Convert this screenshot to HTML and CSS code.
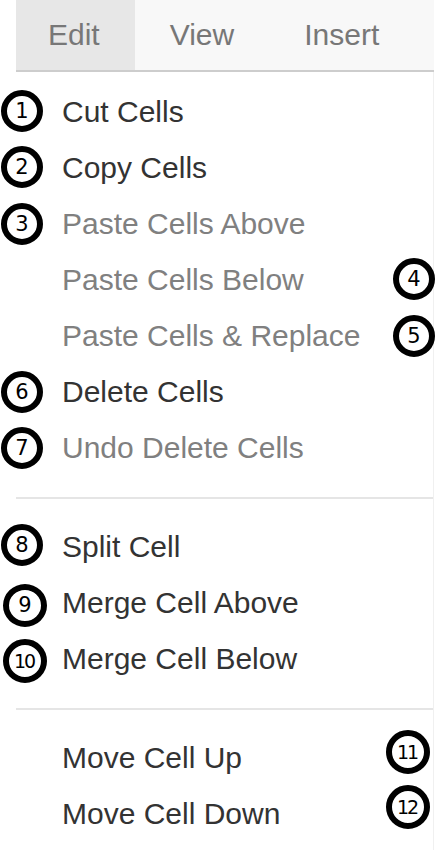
FILE: index.html
```html
<!DOCTYPE html>
<html>
<head>
<meta charset="utf-8">
<link rel="stylesheet" href="styles.css">
</head>
<body>
<div class="page">
  <div class="navbar">
    <div class="tab active">Edit</div>
    <div class="tab">View</div>
    <div class="tab">Insert</div>
  </div>
  <div class="menu">
    <div class="item">Cut Cells</div>
    <div class="item">Copy Cells</div>
    <div class="item disabled">Paste Cells Above</div>
    <div class="item disabled">Paste Cells Below</div>
    <div class="item disabled">Paste Cells &amp; Replace</div>
    <div class="item">Delete Cells</div>
    <div class="item disabled">Undo Delete Cells</div>
    <div class="divider"></div>
    <div class="item">Split Cell</div>
    <div class="item">Merge Cell Above</div>
    <div class="item">Merge Cell Below</div>
    <div class="divider"></div>
    <div class="item">Move Cell Up</div>
    <div class="item">Move Cell Down</div>
  </div>

  <span class="badge b1">1</span>
  <span class="badge b2">2</span>
  <span class="badge b3">3</span>
  <span class="badge b4">4</span>
  <span class="badge b5">5</span>
  <span class="badge b6">6</span>
  <span class="badge b7">7</span>
  <span class="badge b8">8</span>
  <span class="badge b9">9</span>
  <span class="badge b10 two">10</span>
  <span class="badge b11 two">11</span>
  <span class="badge b12 two">12</span>
</div>
</body>
</html>
```

FILE: styles.css
```css
html, body {
  margin: 0;
  padding: 0;
  background: #ffffff;
}

.page {
  position: relative;
  width: 442px;
  height: 850px;
  overflow: hidden;
  font-family: "Liberation Sans", Arial, sans-serif;
}

.navbar {
  margin-left: 16px;
  width: 418px;
  height: 70px;
  background: #f8f8f8;
  border-bottom: 2px solid #cdcdcd;
  display: flex;
  align-items: center;
}

.tab {
  height: 70px;
  line-height: 70px;
  font-size: 30px;
  color: #777777;
  padding: 0 35px;
}

.tab.active {
  background: #e7e7e7;
  padding: 0 35px 0 32px;
}

.menu {
  margin-left: 16px;
  width: 417px;
  border-right: 1px solid #f0f0f0;
  padding-top: 12px;
  height: 766px;
}

.item {
  height: 56px;
  line-height: 56px;
  font-size: 30px;
  color: #333333;
  padding-left: 46px;
  white-space: nowrap;
}

.item.disabled {
  color: #808080;
}

.divider {
  height: 2px;
  background: #e5e5e5;
  margin: 21px 0 20px;
}

.badge {
  position: absolute;
  box-sizing: border-box;
  width: 42px;
  height: 42px;
  border: 6px solid #000;
  border-radius: 50%;
  background: #fff;
  display: flex;
  align-items: center;
  justify-content: center;
  font-family: "DejaVu Sans", sans-serif;
  font-size: 21px;
  color: #000;
  line-height: 1;
}

.badge.two {
  font-size: 19px;
  letter-spacing: -2px;
  padding-right: 2px;
}

.b1 { left: 1px; top: 90px; }
.b2 { left: 1px; top: 146px; }
.b3 { left: 1px; top: 203px; }
.b4 { left: 393px; top: 258px; }
.b5 { left: 393px; top: 315px; }
.b6 { left: 1px; top: 371px; }
.b7 { left: 1px; top: 427px; }
.b8 { left: 1px; top: 524px; }
.b9 { left: 3px; top: 584px; width: 44px; height: 43px; }
.b10 { left: 3px; top: 639px; width: 44px; height: 44px; }
.b11 { left: 386px; top: 730px; width: 44px; height: 44px; }
.b12 { left: 386px; top: 785px; width: 44px; height: 44px; }
```
